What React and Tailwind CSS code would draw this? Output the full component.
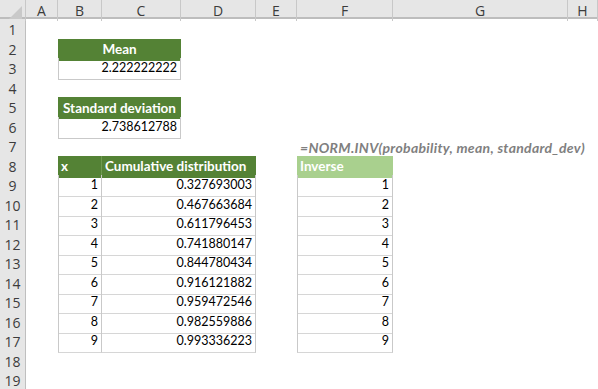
const COLS = "grid grid-cols-[26px_32px_44px_79px_75px_41px_96px_175px_1fr]";
const CELL = "px-[3px] flex items-center whitespace-nowrap";
const HEAD = "text-white font-bold text-[13.5px]";

const cumulative = [
  [1, "0.327693003"],
  [2, "0.467663684"],
  [3, "0.611796453"],
  [4, "0.741880147"],
  [5, "0.844780434"],
  [6, "0.916121882"],
  [7, "0.959472546"],
  [8, "0.982559886"],
  [9, "0.993336223"],
];

const RowNum = ({ n }) => (
  <div className="bg-[#e6e6e6] border-r border-r-[#bfbfbf] border-b border-b-[#d4d4d4] flex items-center justify-center text-[14px] text-[#3c3c3c] font-['Open_Sans',sans-serif]">
    {n}
  </div>
);

const Row = ({ n, children }) => (
  <div className={`${COLS} h-[19.5px]`}>
    <RowNum n={n} />
    {children}
  </div>
);

const Empty = () => <div />;

export default function App() {
  const letters = ["A", "B", "C", "D", "E", "F", "G", "H"];
  return (
    <div className="w-[598px] h-[389px] overflow-hidden bg-white text-black font-['Lato',sans-serif] text-[12.5px]">
      {/* column letters */}
      <div className={`${COLS} h-[19px] bg-[#e6e6e6] border-b-2 border-[#bdbdbd]`}>
        <div className="relative border-r border-[#c8c8c8]">
          <div className="absolute right-[3px] bottom-[2px] w-0 h-0 border-l-[13px] border-l-transparent border-b-[13px] border-b-[#c9c9c9]" />
        </div>
        {letters.map((l) => (
          <div
            key={l}
            className="border-r border-[#c8c8c8] flex items-center justify-center text-[14px] text-[#3c3c3c] font-['Open_Sans',sans-serif]"
          >
            {l}
          </div>
        ))}
      </div>

      <Row n={1} />
      <Row n={2}>
        <Empty />
        <div className={`${CELL} ${HEAD} col-span-2 justify-center bg-[#548235]`}>Mean</div>
      </Row>
      <Row n={3}>
        <Empty />
        <div className={`${CELL} col-span-2 justify-end border border-t-0 border-[#c9c9c9]`}>2.222222222</div>
      </Row>
      <Row n={4} />
      <Row n={5}>
        <Empty />
        <div className={`${CELL} ${HEAD} col-span-2 justify-center bg-[#548235]`}>Standard deviation</div>
      </Row>
      <Row n={6}>
        <Empty />
        <div className={`${CELL} col-span-2 justify-end border border-t-0 border-[#c9c9c9]`}>2.738612788</div>
      </Row>
      <Row n={7}>
        <Empty />
        <Empty />
        <Empty />
        <Empty />
        <Empty />
        <div className={`${CELL} overflow-visible italic font-bold text-[14px] tracking-[0.3px] text-[#7f7f7f]`}>
          =NORM.INV(probability, mean, standard_dev)
        </div>
      </Row>
      <Row n={8}>
        <Empty />
        <div className={`${CELL} ${HEAD} bg-[#548235] border-r border-[#6f9a50]`}>x</div>
        <div className={`${CELL} ${HEAD} col-span-2 bg-[#548235]`}>Cumulative distribution</div>
        <Empty />
        <div className={`${CELL} ${HEAD} bg-[#a9d08e]`}>Inverse</div>
      </Row>
      {cumulative.map(([x, p]) => (
        <Row key={x} n={x + 8}>
          <Empty />
          <div className={`${CELL} justify-end border-l border-r border-b border-l-[#c9c9c9] border-r-[#c9c9c9] border-b-[#d6d6d6]`}>{x}</div>
          <div className={`${CELL} col-span-2 justify-end border-r border-b border-r-[#c9c9c9] border-b-[#d6d6d6]`}>{p}</div>
          <Empty />
          <div className={`${CELL} justify-end border-l border-r border-b border-l-[#c9c9c9] border-r-[#c9c9c9] border-b-[#d6d6d6]`}>{x}</div>
        </Row>
      ))}
      <Row n={18} />
      <Row n={19} />
    </div>
  );
}
